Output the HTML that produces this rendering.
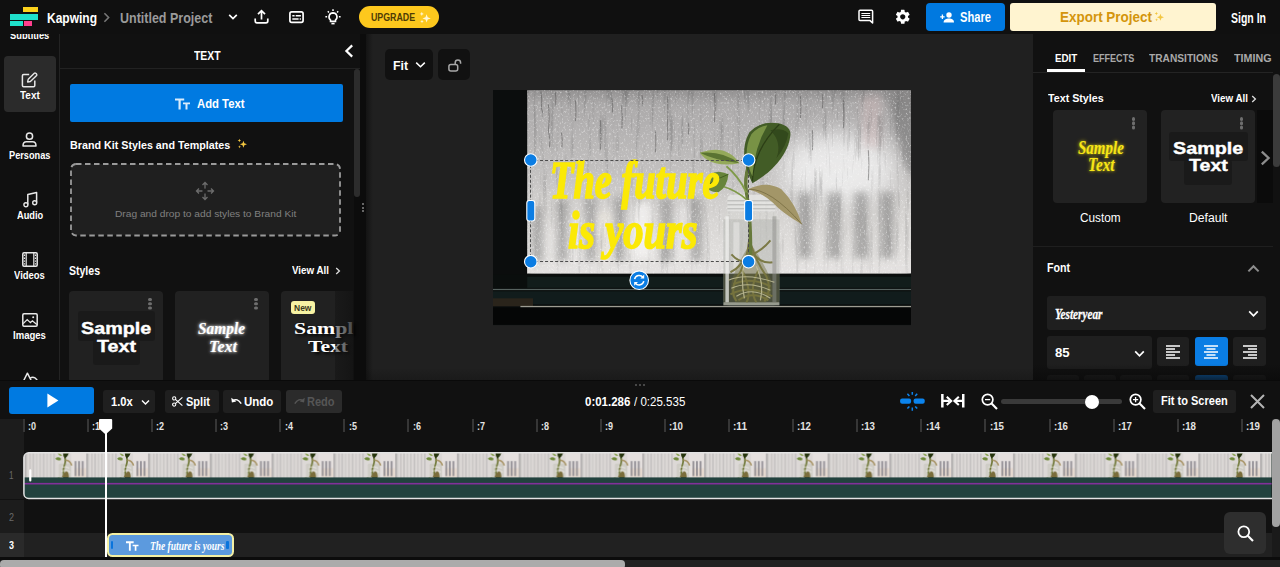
<!DOCTYPE html>
<html lang="en">
<head>
<meta charset="utf-8">
<title>Kapwing</title>
<style>
*{box-sizing:border-box;margin:0;padding:0}
html,body{width:1280px;height:567px;overflow:hidden;background:#111;color:#fff;font-family:"Liberation Sans",sans-serif}
#app{position:absolute;left:0;top:0;width:1280px;height:567px;overflow:hidden;background:#111}
.a{position:absolute}
svg{position:absolute;display:block;overflow:visible}
.t{position:absolute;white-space:nowrap;line-height:1;font-weight:bold;transform-origin:0 0;display:block}
.b{position:absolute;border-radius:4px}
</style>
</head>
<body>
<div id="app">
<!-- ===== SIDE BAR ===== -->
<div class="a" style="left:0;top:34px;width:60px;height:347px;background:#101010;border-right:1px solid #232323"></div>
<span class="t" style="left:10.0px;top:29.6px;font-size:11px;color:#fff;transform:scaleX(0.8460);">Subtitles</span>
<div class="a" style="left:3.5px;top:56.3px;width:52px;height:56px;border-radius:4px;background:#2b2b2b"></div>
<!-- text icon -->
<svg style="left:21px;top:71.5px" width="17.5" height="16" viewBox="0 0 17.5 16"><path d="M8.200 2.600 H2.600 Q1.400 2.600 1.400 3.800 V13.600 Q1.400 14.800 2.600 14.800 H12.600 Q13.800 14.800 13.800 13.600 V8.600" fill="none" stroke="#e8e8e8" stroke-width="1.5"/><path d="M6.600 10 L7.200 7.300 L13.300 1.200 Q14 0.600 14.700 1.200 L15.600 2.100 Q16.200 2.800 15.600 3.500 L9.400 9.500 Z" fill="none" stroke="#e8e8e8" stroke-width="1.400" stroke-linejoin="round"/></svg>
<span class="t" style="left:19.5px;top:89.6px;font-size:11px;color:#fff;transform:scaleX(0.9077);">Text</span>
<!-- personas -->
<svg style="left:22px;top:131.5px" width="15" height="15" viewBox="0 0 15 15"><circle cx="7.500" cy="4.200" r="3.100" fill="none" stroke="#e8e8e8" stroke-width="1.500"/><path d="M1 14 Q1 9.800 4.400 9.800 H10.600 Q14 9.800 14 14 Z" fill="none" stroke="#e8e8e8" stroke-width="1.500" stroke-linejoin="round"/></svg>
<span class="t" style="left:8.6px;top:149.6px;font-size:11px;color:#fff;transform:scaleX(0.8358);">Personas</span>
<!-- audio -->
<svg style="left:22.500px;top:191px" width="15" height="17" viewBox="0 0 15 17"><path d="M4.800 13.600 V3.600 L13.600 1.400 V11.600" fill="none" stroke="#e8e8e8" stroke-width="1.500" stroke-linejoin="round"/><circle cx="2.900" cy="13.800" r="2" fill="none" stroke="#e8e8e8" stroke-width="1.400"/><circle cx="11.700" cy="11.800" r="2" fill="none" stroke="#e8e8e8" stroke-width="1.400"/></svg>
<span class="t" style="left:16.7px;top:209.6px;font-size:11px;color:#fff;transform:scaleX(0.8405);">Audio</span>
<!-- videos -->
<svg style="left:22px;top:252px" width="16" height="15" viewBox="0 0 16 15"><rect x="0.800" y="0.800" width="14.400" height="13.400" rx="1.200" fill="none" stroke="#e8e8e8" stroke-width="1.500"/><path d="M4.200 1 V14 M11.800 1 V14" stroke="#e8e8e8" stroke-width="1.200"/><path d="M2.500 2.600 V12.600 M13.500 2.600 V12.600" stroke="#e8e8e8" stroke-width="1.200" stroke-dasharray="1.400 1.500"/></svg>
<span class="t" style="left:14.3px;top:269.6px;font-size:11px;color:#fff;transform:scaleX(0.8613);">Videos</span>
<!-- images -->
<svg style="left:22px;top:312.500px" width="16" height="14" viewBox="0 0 16 14"><rect x="0.800" y="0.800" width="14.400" height="12.400" rx="1.200" fill="none" stroke="#e8e8e8" stroke-width="1.500"/><path d="M1.200 10.600 L5.200 6.600 L8.400 9.600 L10.400 7.800 L14.800 11.600" fill="none" stroke="#e8e8e8" stroke-width="1.300"/><circle cx="11.200" cy="4.200" r="1" fill="#e8e8e8"/></svg>
<span class="t" style="left:13.3px;top:329.6px;font-size:11px;color:#fff;transform:scaleX(0.8676);">Images</span>
<!-- elements (cut) -->
<svg style="left:21px;top:371.500px" width="18" height="12" viewBox="0 0 18 12"><path d="M1 12 L6.400 1.200 L10.400 9" fill="none" stroke="#e8e8e8" stroke-width="1.500" stroke-linejoin="round"/><path d="M9.200 6.200 A4.600 4.600 0 0 1 16.400 10" fill="none" stroke="#e8e8e8" stroke-width="1.500"/></svg>

<!-- ===== TEXT PANEL ===== -->
<div class="a" style="left:60px;top:34px;width:306px;height:347px;background:#111"></div>
<span class="t" style="left:194.4px;top:49.8px;font-size:12.5px;color:#fff;transform:scaleX(0.8325);">TEXT</span>
<svg style="left:344px;top:44px" width="10" height="14" viewBox="0 0 10 14"><path d="M8.200 1.400 L2.400 7 L8.200 12.600" fill="none" stroke="#fff" stroke-width="2.200"/></svg>
<div class="a" style="left:60px;top:68px;width:300px;height:1px;background:#222"></div>
<!-- scrollbar -->
<div class="a" style="left:353.500px;top:69px;width:6.500px;height:312px;background:#0c0c0c"></div>
<div class="a" style="left:353.500px;top:69px;width:6.500px;height:128px;border-radius:3px;background:#2c2c2c"></div>
<div class="a" style="left:360px;top:34px;width:6px;height:347px;background:#0c0c0c"></div>
<div class="a" style="left:361.500px;top:203px;width:2px;height:2px;background:#666"></div>
<div class="a" style="left:361.500px;top:206.500px;width:2px;height:2px;background:#666"></div>
<div class="a" style="left:361.500px;top:210px;width:2px;height:2px;background:#666"></div>
<!-- add text -->
<div class="a" style="left:69.500px;top:84px;width:273.500px;height:37.500px;border-radius:2px;background:#007ae1"></div>
<svg style="left:174.500px;top:97.500px" width="15" height="12" viewBox="0 0 15 12"><path d="M0 0.400 H9.200 V2.600 H5.700 V11.600 H3.500 V2.600 H0 Z M8 4.400 H15 V6.300 H12.500 V11.600 H10.500 V6.300 H8 Z" fill="#d9ecfb"/></svg>
<span class="t" style="left:197.0px;top:96.9px;font-size:13.5px;color:#fff;transform:scaleX(0.8370);">Add Text</span>
<span class="t" style="left:69.5px;top:140.2px;font-size:11.5px;color:#fff;transform:scaleX(0.9330);">Brand Kit Styles and Templates</span>
<svg style="left:236.500px;top:138px" width="11" height="11" viewBox="0 0 13 13"><path d="M7.600 3.200 L8.700 6.300 L11.800 7.400 L8.700 8.500 L7.600 11.600 L6.500 8.500 L3.400 7.400 L6.500 6.300 Z M2.800 0.800 L3.400 2.300 L4.900 2.900 L3.400 3.500 L2.800 5 L2.200 3.500 L0.700 2.900 L2.200 2.300 Z M3 8.600 L3.500 9.900 L4.800 10.400 L3.500 10.900 L3 12.200 L2.500 10.900 L1.200 10.400 L2.500 9.900 Z" fill="#f3c640"/></svg>
<!-- dashed drop box -->
<svg style="left:70px;top:163px" width="271" height="73.500" viewBox="0 0 271 73.500"><rect x="1" y="1" width="269" height="71.500" rx="5" fill="#1f1f1f" stroke="#9a9a9a" stroke-width="1.800" stroke-dasharray="5.500 3.500"/></svg>
<svg style="left:195px;top:181px" width="20" height="20" viewBox="0 0 20 20"><path d="M10 1.500 V18.500 M1.500 10 H18.500 M7.500 4 L10 1.500 L12.500 4 M7.500 16 L10 18.500 L12.500 16 M4 7.500 L1.500 10 L4 12.500 M16 7.500 L18.500 10 L16 12.500" fill="none" stroke="#6c6c6c" stroke-width="1.300"/><circle cx="10" cy="10" r="2.600" fill="#1f1f1f"/></svg>
<span class="t" style="left:114.7px;top:208.9px;font-size:9.5px;color:#808080;transform:scaleX(1.0728);font-weight:normal;">Drag and drop to add styles to Brand Kit</span>
<span class="t" style="left:69.0px;top:265.2px;font-size:12px;color:#fff;transform:scaleX(0.8767);">Styles</span>
<span class="t" style="left:292.0px;top:265.4px;font-size:11.5px;color:#fff;transform:scaleX(0.8512);">View All</span>
<svg style="left:335px;top:266.500px" width="6" height="8" viewBox="0 0 6 8"><path d="M1.200 1 L4.400 4 L1.200 7" fill="none" stroke="#ddd" stroke-width="1.300"/></svg>
<!-- cards -->
<div class="a" style="left:69px;top:290.500px;width:94px;height:92px;border-radius:4px;background:#212121"></div>
<div class="a" style="left:175.300px;top:290.500px;width:94px;height:92px;border-radius:4px;background:#212121"></div>
<div class="a" style="left:281px;top:290.500px;width:72px;height:92px;border-radius:4px 0 0 4px;background:#212121"></div>
<!-- card1 -->
<div class="a" style="left:77.800px;top:311px;width:77.700px;height:30.400px;border-radius:3px;background:#1a1a1a"></div>
<div class="a" style="left:93px;top:340px;width:47.400px;height:25px;border-radius:3px;background:#1a1a1a"></div>
<span class="t" style="left:80.8px;top:320.2px;font-size:17px;color:#fff;transform:scaleX(1.1606);-webkit-text-stroke:0.400px #fff;">Sample</span>
<span class="t" style="left:97.0px;top:338.2px;font-size:17px;color:#fff;transform:scaleX(1.1572);-webkit-text-stroke:0.400px #fff;">Text</span>
<div class="a" style="left:148.300px;top:297.500px;width:3.400px;height:3.400px;border-radius:2px;background:#6e6e6e;box-shadow:0 4.300px 0 #6e6e6e,0 8.600px 0 #6e6e6e"></div>
<!-- card2 -->
<span class="t" style="left:198.0px;top:319.5px;font-size:17.5px;color:#fff;transform:scaleX(0.8788);font-family:'Liberation Serif',serif;font-style:italic;text-shadow:0 0 3px #fff,0 0 6px rgba(255,255,255,.5);">Sample</span>
<span class="t" style="left:208.5px;top:338.0px;font-size:17.5px;color:#fff;transform:scaleX(0.9223);font-family:'Liberation Serif',serif;font-style:italic;text-shadow:0 0 3px #fff,0 0 6px rgba(255,255,255,.5);">Text</span>
<div class="a" style="left:254.300px;top:297.500px;width:3.400px;height:3.400px;border-radius:2px;background:#6e6e6e;box-shadow:0 4.300px 0 #6e6e6e,0 8.600px 0 #6e6e6e"></div>
<!-- card3 -->
<div class="a" style="left:290.600px;top:300.500px;width:24.200px;height:13.500px;border-radius:3px;background:#f7f3a3"></div>
<span class="t" style="left:294.0px;top:302.7px;font-size:9.5px;color:#3a3a20;transform:scaleX(0.8953);">New</span>
<span class="t" style="left:293.6px;top:320.2px;font-size:17px;color:#fff;transform:scaleX(1.2830);font-family:'Liberation Serif',serif;text-shadow:2px 2px 3px #000;">Sampl</span>
<span class="t" style="left:308.0px;top:338.2px;font-size:17px;color:#fff;transform:scaleX(1.2698);font-family:'Liberation Serif',serif;text-shadow:2px 2px 3px #000;">Text</span>
<div class="a" style="left:335px;top:290px;width:18.500px;height:92px;background:linear-gradient(90deg,rgba(17,17,17,.45),rgba(17,17,17,.8))"></div>

<!-- ===== STAGE ===== -->
<div class="a" style="left:366px;top:34px;width:667px;height:347px;background:#202020"></div>
<div class="a" style="left:366px;top:34px;width:7px;height:347px;background:linear-gradient(90deg,rgba(10,10,10,.55),rgba(10,10,10,0))"></div>
<div class="a" style="left:385.300px;top:49px;width:47.700px;height:31.200px;border-radius:5px;background:#111"></div>
<span class="t" style="left:393.0px;top:58.8px;font-size:13.5px;color:#fff;transform:scaleX(0.9091);">Fit</span>
<svg style="left:414.500px;top:60.500px" width="11" height="8" viewBox="0 0 11 8"><path d="M1.200 1.600 L5.500 5.800 L9.800 1.600" fill="none" stroke="#fff" stroke-width="1.500"/></svg>
<div class="a" style="left:437.900px;top:49px;width:32.100px;height:31.200px;border-radius:5px;background:#111"></div>
<svg style="left:447.500px;top:59px" width="14" height="13" viewBox="0 0 14 13"><rect x="0.900" y="5.600" width="8.800" height="6.400" rx="2" fill="none" stroke="#a8a8a8" stroke-width="1.500"/><path d="M7.200 5.400 V3.800 A2.700 2.700 0 0 1 12.600 3.800 V4.800" fill="none" stroke="#a8a8a8" stroke-width="1.500"/></svg>
<div class="a" style="left:366px;top:368px;width:667px;height:13px;background:linear-gradient(180deg,rgba(10,10,10,0),rgba(10,10,10,.280))"></div>
<!-- canvas -->
<svg style="left:492.600px;top:89.700px" width="418" height="234.600" viewBox="492.600 89.700 418 234.600">
<defs>
<linearGradient id="gw" x1="0" y1="0" x2="0" y2="1"><stop offset="0" stop-color="#a7a5a5"/><stop offset="0.200" stop-color="#b3b1b1"/><stop offset="0.450" stop-color="#c3c1c0"/><stop offset="0.620" stop-color="#d2d0ce"/><stop offset="0.800" stop-color="#dcdad8"/><stop offset="1" stop-color="#e6e4e2"/></linearGradient>
<filter id="b3" x="-20%" y="-20%" width="140%" height="140%"><feGaussianBlur stdDeviation="3.500"/></filter>
<filter id="b9" x="-40%" y="-40%" width="180%" height="180%"><feGaussianBlur stdDeviation="11"/></filter>
<filter id="b05" x="-50%" y="-10%" width="200%" height="120%"><feGaussianBlur stdDeviation="0.450"/></filter>
<filter id="b1" x="-20%" y="-20%" width="140%" height="140%"><feGaussianBlur stdDeviation="0.700"/></filter>
<filter id="rain" x="0" y="0" width="100%" height="100%"><feTurbulence type="fractalNoise" baseFrequency="0.220 0.018" numOctaves="3" seed="7" result="n"/><feColorMatrix type="matrix" values="0 0 0 0 0.150  0 0 0 0 0.150  0 0 0 0 0.150  0 0 0 -2.600 1.150"/></filter>
<filter id="drops" x="0" y="0" width="100%" height="100%"><feTurbulence type="fractalNoise" baseFrequency="0.550 0.450" numOctaves="2" seed="3"/><feColorMatrix type="matrix" values="0 0 0 0 1  0 0 0 0 1  0 0 0 0 1  0 0 0 3.200 -1.750"/></filter>
<linearGradient id="gm" x1="0" y1="0" x2="0" y2="1"><stop offset="0" stop-color="#fff"/><stop offset="0.350" stop-color="#999"/><stop offset="1" stop-color="#555"/></linearGradient><mask id="mrain"><rect x="526.800" y="90" width="383.800" height="183" fill="url(#gm)"/></mask>
<clipPath id="cw"><rect x="526.800" y="90" width="383.800" height="183"/></clipPath>
</defs>
<rect x="492.600" y="89.700" width="418" height="234.600" fill="#0b0d0d"/>
<rect x="526.800" y="90" width="383.800" height="183" fill="url(#gw)"/>
<g clip-path="url(#cw)">
<g filter="url(#b9)"><ellipse cx="838" cy="168" rx="58" ry="36" fill="#f4f4f4" opacity="0.800"/><ellipse cx="600" cy="240" rx="70" ry="26" fill="#efedea" opacity="0.450"/></g>
<g filter="url(#b3)" fill="#6f6f6f" opacity="0.430">
<rect x="531" y="206" width="12" height="56"/><rect x="556" y="200" width="12" height="62"/><rect x="584" y="197" width="12" height="65"/><rect x="613" y="197" width="12" height="65"/><rect x="660" y="198" width="12" height="64"/><rect x="690" y="198" width="12" height="64"/>
</g><g filter="url(#b3)" fill="#6a6a6a" opacity="0.460">
<rect x="798" y="192" width="13" height="66"/><rect x="827" y="192" width="13" height="66"/><rect x="854" y="192" width="13" height="66"/><rect x="880" y="192" width="13" height="66"/>
</g>
<g filter="url(#b3)"><rect x="634" y="203" width="16" height="54" fill="#f4f2f1" opacity="0.800"/><rect x="598" y="212" width="13" height="48" fill="#ebe6dc" opacity="0.600"/><rect x="570" y="220" width="12" height="42" fill="#e8e6e4" opacity="0.500"/><rect x="676" y="206" width="12" height="52" fill="#eeeceb" opacity="0.500"/><rect x="526" y="262" width="384" height="12" fill="#e2e0de" opacity="0.800"/>
<path d="M884 84 H916 V180 L906 168 L895 130 Z" fill="#666666" opacity="0.520"/><rect x="862" y="92" width="18" height="55" fill="#d9bcbe" opacity="0.350"/><rect x="526" y="84" width="384" height="14" fill="#8c8a8a" opacity="0.600"/></g>
<g fill="none" stroke="#4e4c4c" stroke-width="1.100" opacity="0.480" filter="url(#b05)">
<path d="M540.500 91 Q542 100 541 108 Q543 112 542 116"/><path d="M548 104 Q549.500 118 548 130 Q550 140 549 147"/><path d="M561 132 Q562.500 140 561.500 147"/><path d="M555 92 Q556 99 555 106"/>
<path d="M611.500 98 Q613 106 612 112"/><path d="M621 105 Q622.500 116 621.500 128"/><path d="M641.500 94 Q643 100 642 106"/><path d="M600 120 Q601 135 600 150"/><path d="M575 100 Q576 112 575 121"/>
<path d="M688 122 Q689 128 688 134"/><path d="M714 93 Q715.500 108 714 122"/><path d="M667 96 Q668 112 667 126 Q668 134 667 140"/><path d="M655 130 Q656 140 655 152"/>
<path d="M800 96 Q801 106 800 118"/><path d="M822 94 Q823 100 822 108"/><path d="M843 100 Q844 115 843 128"/><path d="M775 92 Q776 98 775 104"/><path d="M868 150 Q869 165 868 180"/><path d="M812 130 Q813 140 812 150"/>
</g>
<g mask="url(#mrain)"><rect x="526.800" y="90" width="383.800" height="183" filter="url(#rain)" opacity="0.650"/></g>
<rect x="526.800" y="90" width="383.800" height="183" filter="url(#drops)" opacity="0.450"/>
</g>
<!-- sill -->
<rect x="492.600" y="273.800" width="418" height="51" fill="#0a0e0d"/>
<rect x="526.800" y="276.500" width="383.800" height="11" fill="#121d1b"/>
<rect x="492.600" y="288.600" width="418" height="1.200" fill="#56625f"/>
<rect x="492.600" y="291" width="418" height="13" fill="#111c1c"/>
<rect x="492.600" y="298" width="40" height="8" fill="#2a241b"/>
<rect x="520" y="305.600" width="390.600" height="1.500" fill="#9d9c92"/>
<rect x="492.600" y="307.200" width="418" height="17.100" fill="#050606"/>
<!-- jar -->
<g filter="url(#b1)">
<path d="M727 212 Q723 215 723 221 V300 Q723 305 729 305 H773 Q779 305 779 300 V221 Q779 215 775 212 V199 Q775 195 770 195 H732 Q727 195 727 199 Z" fill="#d6d6d3" opacity="0.450"/>
<path d="M727 199 Q727 194.500 732 194.500 H770 Q775 194.500 775 199 V211 H727 Z" fill="#e6e6e4" opacity="0.800"/>
<path d="M727 200.500 H775 M727 204.500 H775 M727 208.500 H775" stroke="#b4b4b1" stroke-width="1"/>
<rect x="723" y="219" width="56" height="55" fill="#a9aaa5" opacity="0.380"/>
<rect x="723" y="273.500" width="56" height="31.500" fill="#484d38" opacity="0.920"/>
<rect x="723" y="302" width="56" height="3" fill="#b9bbb2" opacity="0.700"/>
<rect x="725" y="216" width="3.500" height="86" fill="#f4f4f2" opacity="0.700"/><rect x="772" y="216" width="4" height="86" fill="#8e8e8a" opacity="0.500"/>
<rect x="733" y="222" width="6" height="48" fill="#f1f1ef" opacity="0.450"/>
<!-- roots -->
<path d="M748 246 Q738 262 732 278 Q728 296 736 302 H766 Q774 294 770 278 Q762 260 752 246 Z" fill="#6f6e3c" opacity="0.420"/>
<g fill="none" stroke="#77753f" stroke-width="2" opacity="0.950"><path d="M749 238 Q747 262 735 280 Q730 292 736 301"/><path d="M749 240 Q756 262 766 276 Q772 290 764 301"/><path d="M749 250 Q740 268 730 272"/><path d="M750 250 Q760 264 772 262"/><path d="M733 284 Q750 276 770 286"/><path d="M730 294 Q750 284 772 296"/><path d="M738 300 Q752 290 768 300"/><path d="M742 270 Q752 292 746 302"/><path d="M758 270 Q748 290 756 302"/><path d="M750 255 Q762 250 770 240"/><path d="M748 262 Q738 262 731 254"/></g>
<g fill="none" stroke="#c4c19a" stroke-width="1.200" opacity="0.850"><path d="M731 288 Q748 280 770 290"/><path d="M736 296 Q752 286 770 298"/><path d="M744 262 Q740 280 744 298"/><path d="M728 280 Q745 272 774 282"/><path d="M756 266 Q764 284 760 300"/></g>
<!-- stem -->
<path d="M750 262 Q751 220 746 192 Q744 178 748 166" fill="none" stroke="#66793a" stroke-width="3.400"/>
<path d="M746 192 Q738 176 726 166" fill="none" stroke="#7f9a48" stroke-width="1.800"/>
<path d="M747 200 Q736 190 722 186" fill="none" stroke="#7f9a48" stroke-width="1.600"/>
<!-- leaves -->
<path d="M752 183 Q737 153 749 132 Q760 120 778 123 Q791 126 790 135 Q788 154 768 172 Q759 179 752 183 Z" fill="#435c27"/>
<path d="M752 181 Q753 150 779 124" fill="none" stroke="#2c3f17" stroke-width="1.300"/>
<path d="M752 176 Q741 153 751 134 Q758 126 767 125 Q754 147 752 176 Z" fill="#86a04e" opacity="0.800"/>
<path d="M770 130 Q782 127 788 133 Q786 146 776 158 Q782 142 770 130 Z" fill="#2f441a" opacity="0.800"/>
<path d="M739 163 Q726 143 699.500 152.500 Q710 168 739 163 Z" fill="#94a95a"/>
<path d="M739 163 Q722 150 699.500 152.500 Q714 160 739 163 Z" fill="#5a7330"/>
<path d="M728 174 Q712 166 703.500 182 Q706 192 718 192 Q727 187 728 174 Z" fill="#66843a"/>
<path d="M728 174 Q716 178 706 186" fill="none" stroke="#3e5a20" stroke-width="0.900"/>
<path d="M748 189 Q766 180 781 189 Q795 203 801.500 224 Q782 213 772 202 Q762 193 748 189 Z" fill="#a39667"/>
<path d="M748 189 Q770 188 801.500 224" fill="none" stroke="#7b6f45" stroke-width="0.900"/>
</g>
</svg>
<!-- canvas text -->
<span class="t" style="left:549.7px;top:155.2px;font-size:52px;color:#fbe906;transform:scaleX(0.7384);font-family:'Liberation Serif',serif;font-style:italic;-webkit-text-stroke:1.700px #fbe906;">The future</span>
<span class="t" style="left:567.7px;top:204.7px;font-size:52px;color:#fbe906;transform:scaleX(0.7800);font-family:'Liberation Serif',serif;font-style:italic;-webkit-text-stroke:1.700px #fbe906;">is yours</span>
<div class="a" style="left:530.300px;top:159.500px;width:218.800px;height:102.700px;border:1px dashed #4c4c4c"></div>
<svg style="left:520px;top:150px" width="240" height="145" viewBox="520 150 240 145">
<g fill="#0b7de3" stroke="#fff" stroke-width="1.100">
<circle cx="530.800" cy="160" r="6.300"/><circle cx="748.600" cy="160" r="6.300"/><circle cx="530.800" cy="261.700" r="6.300"/><circle cx="748.600" cy="261.700" r="6.300"/>
<rect x="526.800" y="200.500" width="8" height="20.500" rx="2.500"/><rect x="744.600" y="200.500" width="8" height="20.500" rx="2.500"/>
<circle cx="639.200" cy="280.200" r="9.300"/>
</g>
<g fill="none" stroke="#fff" stroke-width="1.500"><path d="M634.600 279.200 A4.800 4.800 0 0 1 643 277.200"/><path d="M643.800 281.200 A4.800 4.800 0 0 1 635.400 283.200"/></g>
<path d="M644.200 274.600 V278.400 H640.400 Z M634.200 285.800 V282 H638 Z" fill="#fff"/>
</svg>

<!-- ===== RIGHT PANEL ===== -->
<div class="a" style="left:1033px;top:34px;width:247px;height:347px;background:#111"></div>
<span class="t" style="left:1055.4px;top:53.0px;font-size:11.5px;color:#fff;transform:scaleX(0.8472);">EDIT</span>
<span class="t" style="left:1092.8px;top:53.0px;font-size:11.5px;color:#a9a9a9;transform:scaleX(0.7864);">EFFECTS</span>
<span class="t" style="left:1149.0px;top:53.0px;font-size:11.5px;color:#a9a9a9;transform:scaleX(0.8851);">TRANSITIONS</span>
<span class="t" style="left:1233.5px;top:53.0px;font-size:11.5px;color:#a9a9a9;transform:scaleX(0.9317);">TIMING</span>
<div class="a" style="left:1033px;top:72px;width:240px;height:1px;background:#242424"></div>
<div class="a" style="left:1047px;top:68.700px;width:38.400px;height:3px;background:#fff"></div>
<!-- scrollbar -->
<div class="a" style="left:1273px;top:73.500px;width:7px;height:93px;border-radius:3.500px;background:#3b3b3b"></div>
<span class="t" style="left:1048.3px;top:93.1px;font-size:11.5px;color:#fff;transform:scaleX(0.9303);">Text Styles</span>
<span class="t" style="left:1211.0px;top:92.9px;font-size:11.5px;color:#fff;transform:scaleX(0.8512);">View All</span>
<svg style="left:1250.500px;top:94.500px" width="6" height="8" viewBox="0 0 6 8"><path d="M1.200 1 L4.400 4 L1.200 7" fill="none" stroke="#ddd" stroke-width="1.300"/></svg>
<div class="a" style="left:1053px;top:109.900px;width:94px;height:93.600px;border-radius:4px;background:#222"></div>
<div class="a" style="left:1160.800px;top:109.900px;width:94px;height:93.600px;border-radius:4px;background:#222"></div>
<div class="a" style="left:1257.400px;top:109.900px;width:15.600px;height:93.600px;background:#0b0b0b"></div>
<svg style="left:1259.500px;top:149.500px" width="11" height="16" viewBox="0 0 11 16"><path d="M1.800 1.600 L8.600 8 L1.800 14.400" fill="none" stroke="#8d8d8d" stroke-width="2.300"/></svg>
<div class="a" style="left:1131.800px;top:117.300px;width:3.400px;height:3.400px;border-radius:2px;background:#6e6e6e;box-shadow:0 4.300px 0 #6e6e6e,0 8.600px 0 #6e6e6e"></div>
<div class="a" style="left:1239.600px;top:117.300px;width:3.400px;height:3.400px;border-radius:2px;background:#6e6e6e;box-shadow:0 4.300px 0 #6e6e6e,0 8.600px 0 #6e6e6e"></div>
<span class="t" style="left:1077.6px;top:138.5px;font-size:18.5px;color:#f7e616;transform:scaleX(0.8102);font-family:'Liberation Serif',serif;font-style:italic;text-shadow:0 0 3px rgba(247,230,22,.7),0 0 6px rgba(247,230,22,.4);">Sample</span>
<span class="t" style="left:1088.0px;top:155.5px;font-size:18.5px;color:#f7e616;transform:scaleX(0.8256);font-family:'Liberation Serif',serif;font-style:italic;text-shadow:0 0 3px rgba(247,230,22,.7),0 0 6px rgba(247,230,22,.4);">Text</span>
<div class="a" style="left:1169px;top:131.700px;width:78.600px;height:29.300px;border-radius:3px;background:#1a1a1a"></div>
<div class="a" style="left:1184.400px;top:160px;width:47.600px;height:25px;border-radius:3px;background:#1a1a1a"></div>
<span class="t" style="left:1172.8px;top:140.3px;font-size:17px;color:#fff;transform:scaleX(1.1606);-webkit-text-stroke:0.400px #fff;">Sample</span>
<span class="t" style="left:1188.7px;top:157.2px;font-size:17px;color:#fff;transform:scaleX(1.1512);-webkit-text-stroke:0.400px #fff;">Text</span>
<span class="t" style="left:1080.0px;top:211.6px;font-size:12px;color:#fff;transform:scaleX(0.9820);font-weight:normal;">Custom</span>
<span class="t" style="left:1189.0px;top:211.6px;font-size:12px;color:#fff;transform:scaleX(1.0123);font-weight:normal;">Default</span>
<div class="a" style="left:1033px;top:246px;width:240px;height:1px;background:#1f1f1f"></div>
<span class="t" style="left:1047.4px;top:262.2px;font-size:12px;color:#fff;transform:scaleX(0.8885);">Font</span>
<svg style="left:1246.500px;top:263.500px" width="13" height="9" viewBox="0 0 13 9"><path d="M1.400 7.400 L6.500 2.200 L11.600 7.400" fill="none" stroke="#8d8d8d" stroke-width="2"/></svg>
<div class="a" style="left:1047.400px;top:296.400px;width:218.600px;height:34px;border-radius:3px;background:#1f1f1f"></div>
<span class="t" style="left:1054.6px;top:306.5px;font-size:15px;color:#fff;transform:scaleX(0.7487);font-family:'Liberation Serif',serif;font-style:italic;-webkit-text-stroke:0.300px #fff;">Yesteryear</span>
<svg style="left:1247.500px;top:310px" width="11" height="8" viewBox="0 0 11 8"><path d="M1.200 1.400 L5.500 5.800 L9.800 1.400" fill="none" stroke="#fff" stroke-width="1.700"/></svg>
<div class="a" style="left:1047.400px;top:336.300px;width:105px;height:32.700px;border-radius:3px;background:#1f1f1f"></div>
<span class="t" style="left:1054.9px;top:346.2px;font-size:13.5px;color:#fff;transform:scaleX(0.9780);">85</span>
<svg style="left:1133.800px;top:349.500px" width="11" height="8" viewBox="0 0 11 8"><path d="M1.200 1.400 L5.500 5.800 L9.800 1.400" fill="none" stroke="#fff" stroke-width="1.700"/></svg>
<div class="a" style="left:1157px;top:337px;width:32px;height:29.300px;border-radius:3px;background:#1f1f1f"></div>
<div class="a" style="left:1195px;top:337px;width:32.500px;height:29.300px;border-radius:3px;background:#0a7de4"></div>
<div class="a" style="left:1233px;top:337px;width:33px;height:29.300px;border-radius:3px;background:#1f1f1f"></div>
<svg style="left:1166px;top:344.500px" width="14" height="14" viewBox="0 0 14 14"><path d="M0 1 H14 M0 4 H9 M0 7 H14 M0 10 H9 M0 13 H14" stroke="#fff" stroke-width="1.500"/></svg>
<svg style="left:1204.200px;top:344.500px" width="14" height="14" viewBox="0 0 14 14"><path d="M0 1 H14 M2.500 4 H11.500 M0 7 H14 M2.500 10 H11.500 M0 13 H14" stroke="#fff" stroke-width="1.500"/></svg>
<svg style="left:1242.500px;top:344.500px" width="14" height="14" viewBox="0 0 14 14"><path d="M0 1 H14 M5 4 H14 M0 7 H14 M5 10 H14 M0 13 H14" stroke="#fff" stroke-width="1.500"/></svg>
<!-- next row (cut) -->
<div class="a" style="left:1047.400px;top:375px;width:32px;height:12px;border-radius:3px;background:#1f1f1f"></div>
<div class="a" style="left:1084px;top:375px;width:32px;height:12px;border-radius:3px;background:#1f1f1f"></div>
<div class="a" style="left:1120px;top:375px;width:32px;height:12px;border-radius:3px;background:#1f1f1f"></div>
<div class="a" style="left:1157px;top:375px;width:32px;height:12px;border-radius:3px;background:#1f1f1f"></div>
<div class="a" style="left:1195px;top:375px;width:32.500px;height:12px;border-radius:3px;background:#0a5ca8"></div>
<div class="a" style="left:1233px;top:375px;width:33px;height:12px;border-radius:3px;background:#1f1f1f"></div>
<div class="a" style="left:1033px;top:364px;width:247px;height:17px;background:linear-gradient(180deg,rgba(10,10,10,0),rgba(10,10,10,.720))"></div>

<!-- ===== TOP BAR ===== -->
<div class="a" style="left:0;top:0;width:1280px;height:34px;background:#101010"></div>
<div class="a" style="left:23px;top:7.100px;width:14.700px;height:5.400px;background:#fcd21c"></div>
<div class="a" style="left:10px;top:14px;width:27.700px;height:5.700px;background:#1fe0cb"></div>
<div class="a" style="left:10px;top:21.100px;width:12.600px;height:5.100px;background:#1fe0cb"></div>
<div class="a" style="left:24.200px;top:21.100px;width:8px;height:5.100px;background:#ff3f8e"></div>
<span class="t" style="left:47.0px;top:10.5px;font-size:14px;color:#fff;transform:scaleX(0.8570);">Kapwing</span>
<svg style="left:103.300px;top:12.300px" width="7.500" height="11" viewBox="0 0 7.500 11"><path d="M1.400 1.300 L5.600 5.500 L1.400 9.700" fill="none" stroke="#777" stroke-width="1.6"/></svg>
<span class="t" style="left:120.0px;top:10.5px;font-size:14px;color:#9a9a9a;transform:scaleX(0.8921);">Untitled Project</span>
<svg style="left:228px;top:13px" width="10" height="8" viewBox="0 0 10 8"><path d="M1.2 1.8 L5 5.6 L8.8 1.8" fill="none" stroke="#fff" stroke-width="1.7"/></svg>
<!-- upload -->
<svg style="left:253.500px;top:8.800px" width="15" height="15" viewBox="0 0 15 15"><path d="M7.500 10.400 V1.800 M4 5.200 L7.500 1.600 L11 5.200" fill="none" stroke="#fff" stroke-width="1.700"/><path d="M1.200 9.600 V12 Q1.200 13.800 3 13.800 H12 Q13.800 13.800 13.800 12 V9.600" fill="none" stroke="#fff" stroke-width="1.700"/></svg>
<!-- subtitles -->
<svg style="left:289px;top:10.800px" width="15" height="12.200" viewBox="0 0 15 12.200"><rect x="0.900" y="0.900" width="13.200" height="10.400" rx="1.800" fill="none" stroke="#fff" stroke-width="1.700"/><path d="M3.300 4.800 H5.600 M6.700 4.800 H11.900 M3.300 8 H9.600 M10.700 8 H11.900" stroke="#fff" stroke-width="1.500"/></svg>
<!-- bulb -->
<svg style="left:324.700px;top:8.800px" width="16" height="16" viewBox="0 0 16 16"><path d="M8 3.900 A4 4 0 0 0 5.500 11 V12.400 H10.500 V11 A4 4 0 0 0 8 3.900 Z" fill="none" stroke="#fff" stroke-width="1.600"/><path d="M6.400 14.600 H9.600" stroke="#fff" stroke-width="1.600"/><path d="M8 0.300 V1.900 M2.800 2.300 L3.900 3.500 M13.200 2.300 L12.100 3.500 M0.400 7.800 H2.100 M13.900 7.800 H15.600" stroke="#fff" stroke-width="1.500"/></svg>
<!-- upgrade -->
<div class="a" style="left:359px;top:6px;width:80px;height:21.5px;border-radius:11px;background:#fdc81d"></div>
<span class="t" style="left:370.7px;top:12.2px;font-size:11px;color:#4f3c05;transform:scaleX(0.8016);">UPGRADE</span>
<svg style="left:419px;top:10.5px" width="13" height="13" viewBox="0 0 13 13"><path d="M7.6 3.2 L8.7 6.3 L11.8 7.4 L8.7 8.5 L7.6 11.6 L6.5 8.5 L3.4 7.4 L6.5 6.3 Z M2.8 0.8 L3.4 2.3 L4.9 2.9 L3.4 3.5 L2.8 5 L2.2 3.5 L0.7 2.9 L2.2 2.3 Z M3 8.6 L3.5 9.9 L4.8 10.4 L3.5 10.9 L3 12.2 L2.5 10.9 L1.2 10.4 L2.5 9.9 Z" fill="#fff7d6"/></svg>
<!-- comment -->
<svg style="left:858px;top:9px" width="15.500" height="15" viewBox="0 0 15.500 15"><path d="M2 1.300 H13.600 Q14.600 1.300 14.600 2.300 V14 L11.800 11.400 H2 Q1 11.400 1 10.400 V2.300 Q1 1.300 2 1.300 Z" fill="none" stroke="#fff" stroke-width="1.500" stroke-linejoin="round"/><path d="M3.400 4.500 H12.200 M3.400 6.500 H12.200 M3.400 8.500 H12.200" stroke="#fff" stroke-width="1.100"/></svg>
<!-- gear -->
<svg style="left:894.100px;top:8.100px" width="17.500" height="17.500" viewBox="0 0 24 24"><path fill="#fff" d="M19.14 12.94c.04-.3.06-.61.06-.94 0-.32-.02-.64-.07-.94l2.03-1.58a.49.49 0 0 0 .12-.61l-1.92-3.32a.488.488 0 0 0-.59-.22l-2.39.96c-.5-.38-1.03-.7-1.62-.94l-.36-2.54a.484.484 0 0 0-.48-.41h-3.84c-.24 0-.43.17-.47.41l-.36 2.54c-.59.24-1.13.57-1.62.94l-2.39-.96c-.22-.08-.47 0-.59.22L2.74 8.870c-.12.21-.08.47.12.61l2.03 1.58c-.05.3-.09.63-.09.94s.02.64.07.94l-2.03 1.58a.49.49 0 0 0-.12.61l1.920 3.32c.12.22.37.29.59.22l2.390-.96c.5.38 1.030.7 1.620.94l.36 2.540c.05.24.24.41.48.41h3.840c.24 0 .44-.17.47-.41l.36-2.540c.59-.24 1.130-.56 1.620-.94l2.390.96c.22.08.47 0 .59-.22l1.920-3.320c.12-.22.07-.47-.12-.61l-2.010-1.580zM12 15.600c-1.980 0-3.600-1.620-3.600-3.600s1.620-3.600 3.600-3.600 3.600 1.620 3.600 3.600-1.620 3.600-3.600 3.600z"/></svg>
<!-- share -->
<div class="a" style="left:925.5px;top:2.7px;width:79.5px;height:28.3px;border-radius:4px;background:#0079e0"></div>
<svg style="left:939.5px;top:11.5px" width="14" height="11" viewBox="0 0 14 11"><circle cx="9" cy="3" r="2.7" fill="#fff"/><path d="M3.6 10.6 C3.6 7.6 6.2 6.6 9 6.6 C11.800 6.6 14 7.6 14 10.6 Z" fill="#fff"/><path d="M0.200 4.800 H4.600 M2.400 2.600 V7" stroke="#fff" stroke-width="1.3"/></svg>
<span class="t" style="left:960.3px;top:9.8px;font-size:14px;color:#fff;transform:scaleX(0.7965);">Share</span>
<!-- export -->
<div class="a" style="left:1010px;top:3px;width:206px;height:28px;border-radius:3px;background:#fff4d0"></div>
<span class="t" style="left:1060.0px;top:9.3px;font-size:15px;color:#d4950c;transform:scaleX(0.8973);">Export Project</span>
<svg style="left:1154px;top:11px" width="11" height="11" viewBox="0 0 13 13"><path d="M7.600 3.200 L8.700 6.300 L11.800 7.400 L8.700 8.500 L7.600 11.600 L6.500 8.500 L3.400 7.400 L6.500 6.300 Z M2.800 0.800 L3.400 2.300 L4.900 2.900 L3.400 3.500 L2.800 5 L2.200 3.500 L0.700 2.900 L2.200 2.300 Z M3 8.600 L3.500 9.900 L4.800 10.400 L3.500 10.900 L3 12.200 L2.500 10.900 L1.200 10.400 L2.500 9.900 Z" fill="#f3c640"/></svg>
<span class="t" style="left:1231.0px;top:10.5px;font-size:14px;color:#fff;transform:scaleX(0.7499);">Sign In</span>

<!-- ===== TIMELINE ===== -->
<div class="a" style="left:0;top:380.500px;width:1280px;height:187px;background:#111"></div>
<div class="a" style="left:0;top:380px;width:1280px;height:1px;background:#0a0a0a"></div>
<div class="a" style="left:635.3px;top:383.500px;width:2px;height:2px;border-radius:1px;background:#5a5a5a"></div>
<div class="a" style="left:639.3px;top:383.500px;width:2px;height:2px;border-radius:1px;background:#5a5a5a"></div>
<div class="a" style="left:643.3px;top:383.500px;width:2px;height:2px;border-radius:1px;background:#5a5a5a"></div>
<div class="a" style="left:9px;top:386.700px;width:85px;height:27.500px;border-radius:3px;background:#007ae1"></div>
<svg style="left:47px;top:393px" width="12" height="15" viewBox="0 0 12 15"><path d="M0.400 0.600 L11.400 7.500 L0.400 14.400 Z" fill="#fff"/></svg>
<div class="a" style="left:103.200px;top:390px;width:52.300px;height:23px;border-radius:3px;background:#1f1f1f"></div>
<span class="t" style="left:111.0px;top:395.0px;font-size:13px;color:#fff;transform:scaleX(0.8573);">1.0x</span>
<svg style="left:140.500px;top:398.500px" width="9" height="7" viewBox="0 0 9 7"><path d="M1 1.400 L4.500 5 L8 1.400" fill="none" stroke="#fff" stroke-width="1.400"/></svg>
<div class="a" style="left:165px;top:390px;width:53.500px;height:23px;border-radius:3px;background:#1f1f1f"></div>
<svg style="left:172.400px;top:396px" width="11" height="11" viewBox="0 0 11 11"><circle cx="2.200" cy="2.400" r="1.600" fill="none" stroke="#fff" stroke-width="1.100"/><circle cx="2.200" cy="8.600" r="1.600" fill="none" stroke="#fff" stroke-width="1.100"/><path d="M3.400 3.400 L10.400 9.600 M3.400 7.600 L10.400 1.400" stroke="#fff" stroke-width="1.200"/></svg>
<span class="t" style="left:186.4px;top:395.0px;font-size:13px;color:#fff;transform:scaleX(0.8484);">Split</span>
<div class="a" style="left:223px;top:390px;width:58.200px;height:23px;border-radius:3px;background:#1f1f1f"></div>
<svg style="left:231px;top:397px" width="11" height="9" viewBox="0 0 11 9"><path d="M1.400 4 Q6.500 0.400 10.200 6.600" fill="none" stroke="#fff" stroke-width="1.500"/><path d="M0.300 0.800 L0.900 5.400 L5.200 4.600 Z" fill="#fff"/></svg>
<span class="t" style="left:244.0px;top:395.0px;font-size:13px;color:#fff;transform:scaleX(0.8820);">Undo</span>
<div class="a" style="left:286px;top:390px;width:56.200px;height:23px;border-radius:3px;background:#2b2b2b"></div>
<svg style="left:293.500px;top:397px" width="11" height="9" viewBox="0 0 11 9"><path d="M9.600 4 Q4.500 0.400 0.800 6.600" fill="none" stroke="#555" stroke-width="1.500"/><path d="M10.700 0.800 L10.100 5.400 L5.800 4.600 Z" fill="#555"/></svg>
<span class="t" style="left:307.4px;top:395.0px;font-size:13px;color:#565656;transform:scaleX(0.8492);">Redo</span>
<span class="t" style="left:585.0px;top:395.5px;font-size:12.5px;color:#fff;transform:scaleX(0.9178);">0:01.286</span>
<span class="t" style="left:634.4px;top:395.5px;font-size:12.5px;color:#fff;transform:scaleX(0.9225);font-weight:normal;">/ 0:25.535</span>
<svg style="left:900px;top:391px" width="25" height="20" viewBox="0 0 25 20"><rect x="0.100" y="7.500" width="11" height="5.200" rx="2" fill="#0b84ee"/><rect x="13.600" y="7.500" width="11.100" height="5.200" rx="2" fill="#0b84ee"/><path d="M12.300 1 V3.800 M7.400 2.800 L9.400 5 M17.200 2.800 L15.200 5 M12.300 19.700 V16.600 M7.400 17.600 L9.400 15.400 M17.200 17.600 L15.200 15.400" stroke="#0b84ee" stroke-width="1.500"/></svg>
<svg style="left:941px;top:394.300px" width="24" height="14" viewBox="0 0 24 14"><path d="M1.350 0 V13.600 M22.250 0 V13.600" stroke="#fff" stroke-width="2.500"/><path d="M2 6.900 H8.600 M21.600 6.900 H15" stroke="#fff" stroke-width="2.100"/><path d="M5.800 2.800 L10.200 6.900 L5.800 11 M17.800 2.800 L13.400 6.900 L17.800 11" fill="none" stroke="#fff" stroke-width="2.100"/></svg>
<svg style="left:980.500px;top:392.500px" width="17" height="17" viewBox="0 0 17 17"><circle cx="6.600" cy="6.600" r="5.300" fill="none" stroke="#fff" stroke-width="1.700"/><path d="M10.600 10.600 L16 16" stroke="#fff" stroke-width="2.100"/><path d="M4 6.600 H9.200" stroke="#fff" stroke-width="1.300"/></svg>
<div class="a" style="left:1001px;top:399px;width:121px;height:5.200px;border-radius:2.600px;background:#3a3a3a"></div>
<div class="a" style="left:1084.600px;top:394.600px;width:14px;height:14px;border-radius:7px;background:#fff"></div>
<svg style="left:1129px;top:392.500px" width="17" height="17" viewBox="0 0 17 17"><circle cx="6.600" cy="6.600" r="5.300" fill="none" stroke="#fff" stroke-width="1.700"/><path d="M10.600 10.600 L16 16" stroke="#fff" stroke-width="2.100"/><path d="M4 6.600 H9.200 M6.600 4 V9.200" stroke="#fff" stroke-width="1.300"/></svg>
<div class="a" style="left:1153.400px;top:390px;width:82.600px;height:23px;border-radius:3px;background:#1f1f1f"></div>
<span class="t" style="left:1161.0px;top:395.2px;font-size:12.5px;color:#fff;transform:scaleX(0.8822);">Fit to Screen</span>
<svg style="left:1250px;top:394px" width="15" height="15" viewBox="0 0 15 15"><path d="M1 1 L14 14 M14 1 L1 14" stroke="#b4b4b4" stroke-width="2"/></svg>
<div class="a" style="left:0;top:419px;width:23.600px;height:140px;background:#1c1c1c"></div>
<div class="a" style="left:0;top:533px;width:1272px;height:24px;background:#212121"></div>
<div class="a" style="left:0;top:533px;width:23.600px;height:24px;background:#2a2a2a"></div>
<div class="a" style="left:0;top:499px;width:23.600px;height:1px;background:#111"></div>
<div class="a" style="left:23px;top:419px;width:2px;height:13px;background:#363636"></div>
<span class="t" style="left:28.1px;top:421.2px;font-size:11px;color:#e4e4e4;transform:scaleX(0.8179);">:0</span>
<div class="a" style="left:87px;top:419px;width:2px;height:13px;background:#363636"></div>
<span class="t" style="left:92.2px;top:421.2px;font-size:11px;color:#e4e4e4;transform:scaleX(0.8179);">:1</span>
<div class="a" style="left:151px;top:419px;width:2px;height:13px;background:#363636"></div>
<span class="t" style="left:156.3px;top:421.2px;font-size:11px;color:#e4e4e4;transform:scaleX(0.8179);">:2</span>
<div class="a" style="left:215px;top:419px;width:2px;height:13px;background:#363636"></div>
<span class="t" style="left:220.4px;top:421.2px;font-size:11px;color:#e4e4e4;transform:scaleX(0.8179);">:3</span>
<div class="a" style="left:279px;top:419px;width:2px;height:13px;background:#363636"></div>
<span class="t" style="left:284.5px;top:421.2px;font-size:11px;color:#e4e4e4;transform:scaleX(0.8179);">:4</span>
<div class="a" style="left:343px;top:419px;width:2px;height:13px;background:#363636"></div>
<span class="t" style="left:348.6px;top:421.2px;font-size:11px;color:#e4e4e4;transform:scaleX(0.8179);">:5</span>
<div class="a" style="left:407px;top:419px;width:2px;height:13px;background:#363636"></div>
<span class="t" style="left:412.7px;top:421.2px;font-size:11px;color:#e4e4e4;transform:scaleX(0.8179);">:6</span>
<div class="a" style="left:472px;top:419px;width:2px;height:13px;background:#363636"></div>
<span class="t" style="left:476.8px;top:421.2px;font-size:11px;color:#e4e4e4;transform:scaleX(0.8179);">:7</span>
<div class="a" style="left:536px;top:419px;width:2px;height:13px;background:#363636"></div>
<span class="t" style="left:540.9px;top:421.2px;font-size:11px;color:#e4e4e4;transform:scaleX(0.8179);">:8</span>
<div class="a" style="left:600px;top:419px;width:2px;height:13px;background:#363636"></div>
<span class="t" style="left:605.0px;top:421.2px;font-size:11px;color:#e4e4e4;transform:scaleX(0.8179);">:9</span>
<div class="a" style="left:664px;top:419px;width:2px;height:13px;background:#363636"></div>
<span class="t" style="left:669.1px;top:421.2px;font-size:11px;color:#e4e4e4;transform:scaleX(0.8802);">:10</span>
<div class="a" style="left:728px;top:419px;width:2px;height:13px;background:#363636"></div>
<span class="t" style="left:733.2px;top:421.2px;font-size:11px;color:#e4e4e4;transform:scaleX(0.9152);">:11</span>
<div class="a" style="left:792px;top:419px;width:2px;height:13px;background:#363636"></div>
<span class="t" style="left:797.3px;top:421.2px;font-size:11px;color:#e4e4e4;transform:scaleX(0.8802);">:12</span>
<div class="a" style="left:856px;top:419px;width:2px;height:13px;background:#363636"></div>
<span class="t" style="left:861.4px;top:421.2px;font-size:11px;color:#e4e4e4;transform:scaleX(0.8802);">:13</span>
<div class="a" style="left:920px;top:419px;width:2px;height:13px;background:#363636"></div>
<span class="t" style="left:925.5px;top:421.2px;font-size:11px;color:#e4e4e4;transform:scaleX(0.8802);">:14</span>
<div class="a" style="left:984px;top:419px;width:2px;height:13px;background:#363636"></div>
<span class="t" style="left:989.6px;top:421.2px;font-size:11px;color:#e4e4e4;transform:scaleX(0.8802);">:15</span>
<div class="a" style="left:1049px;top:419px;width:2px;height:13px;background:#363636"></div>
<span class="t" style="left:1053.7px;top:421.2px;font-size:11px;color:#e4e4e4;transform:scaleX(0.8802);">:16</span>
<div class="a" style="left:1113px;top:419px;width:2px;height:13px;background:#363636"></div>
<span class="t" style="left:1117.8px;top:421.2px;font-size:11px;color:#e4e4e4;transform:scaleX(0.8802);">:17</span>
<div class="a" style="left:1177px;top:419px;width:2px;height:13px;background:#363636"></div>
<span class="t" style="left:1181.9px;top:421.2px;font-size:11px;color:#e4e4e4;transform:scaleX(0.8802);">:18</span>
<div class="a" style="left:1241px;top:419px;width:2px;height:13px;background:#363636"></div>
<span class="t" style="left:1246.0px;top:421.2px;font-size:11px;color:#e4e4e4;transform:scaleX(0.8802);">:19</span>
<span class="t" style="left:9.0px;top:470.1px;font-size:11.5px;color:#6a6a6a;transform:scaleX(0.7024);font-weight:normal;">1</span>
<span class="t" style="left:9.0px;top:511.7px;font-size:11.5px;color:#6a6a6a;transform:scaleX(0.7805);font-weight:normal;">2</span>
<span class="t" style="left:8.8px;top:539.9px;font-size:11.5px;color:#fff;transform:scaleX(0.7805);">3</span>
<svg style="left:23.300px;top:451.700px" width="1248.7" height="47.200" viewBox="0 0 1248.7 47.200"><defs><filter id="tb" x="-5%" y="-20%" width="110%" height="140%"><feGaussianBlur stdDeviation="0.750"/></filter><pattern id="thumb" x="1.200" y="1.100" width="61.800" height="24.300" patternUnits="userSpaceOnUse"><rect width="61.800" height="24.300" fill="#dcd8d6"/><g filter="url(#tb)"><rect x="1.5" y="-2" width="1.600" height="28" fill="#a19e9f" opacity="0.22"/><rect x="5.0" y="-2" width="1.600" height="28" fill="#a19e9f" opacity="0.29"/><rect x="8.2" y="-2" width="1.600" height="28" fill="#a19e9f" opacity="0.37"/><rect x="11.6" y="-2" width="1.600" height="28" fill="#a19e9f" opacity="0.22"/><rect x="15.0" y="-2" width="1.600" height="28" fill="#a19e9f" opacity="0.29"/><rect x="18.6" y="-2" width="1.600" height="28" fill="#a19e9f" opacity="0.37"/><rect x="22.0" y="-2" width="1.600" height="28" fill="#a19e9f" opacity="0.22"/><rect x="25.6" y="-2" width="1.600" height="28" fill="#a19e9f" opacity="0.29"/><rect x="29.0" y="-2" width="1.600" height="28" fill="#a19e9f" opacity="0.37"/><rect x="47" y="-2" width="14.800" height="28" fill="#ece8e5" opacity="0.550"/><rect x="50" y="15" width="11.800" height="11" fill="#e3cdb9" opacity="0.400"/><rect x="50.3" y="8" width="1.900" height="15" fill="#85828a" opacity="0.800"/><rect x="53.8" y="8" width="1.900" height="15" fill="#85828a" opacity="0.800"/><rect x="57.4" y="8" width="1.900" height="15" fill="#85828a" opacity="0.800"/><rect x="-1" y="-2" width="3" height="28" fill="#aaa6a6" opacity="0.700"/><rect x="34.500" y="10.500" width="12.500" height="16" rx="1.500" fill="#cfcdc6"/><path d="M40 25 Q38 17 40.500 11 Q42 6 39.500 1" fill="none" stroke="#6f7838" stroke-width="1.700"/><path d="M38.500 -1 Q42 -1.500 45 -1 Q43.500 3.500 40.500 5.500 Q39 3 38.500 -1 Z" fill="#26340f"/><path d="M36.500 5.200 Q33.500 3 31 5.600 Q32.500 8.200 36.500 7 Z" fill="#6f8a3a"/><path d="M33 -0.500 Q36 0.500 38 2.400 L36 3 Q34 1.500 33 -0.500 Z" fill="#86a04a"/><path d="M41.500 7 Q46 7.500 47.500 12.500" fill="none" stroke="#a89466" stroke-width="1.600"/><path d="M37 26 Q39 19 42.500 18 Q45 20 44.500 26 Z" fill="#7a6d3a"/><path d="M37.500 14 Q41 13 45 15 M37 18 Q41 16 46 19" fill="none" stroke="#f2f0ea" stroke-width="0.900" opacity="0.800"/></g></pattern><clipPath id="clipc"><rect x="0.750" y="0.750" width="1254.7" height="45.700" rx="4.800"/></clipPath></defs><g clip-path="url(#clipc)"><rect x="0" y="0" width="1248.7" height="47.200" fill="#22423e"/><rect x="0" y="0" width="1248.7" height="25.400" fill="url(#thumb)"/><rect x="0" y="30.900" width="1248.7" height="1.600" fill="#82309a"/></g><rect x="0.750" y="0.750" width="1254.7" height="45.700" rx="4.800" fill="none" stroke="#e4e4e4" stroke-width="1.500"/><rect x="6" y="17.300" width="2.200" height="12.200" rx="1.100" fill="#fff"/></svg>
<div class="a" style="left:106.900px;top:533.400px;width:127.400px;height:23.300px;border-radius:5.500px;background:#5c9ade;border:2.200px solid #f4f0a4"></div>
<div class="a" style="left:110.800px;top:541px;width:2.400px;height:8px;border-radius:1px;background:#0a74dc"></div>
<div class="a" style="left:226.200px;top:541px;width:2.400px;height:8px;border-radius:1px;background:#0a74dc"></div>
<svg style="left:126px;top:541px" width="12.500" height="10" viewBox="0 0 15 12"><path d="M0 0.400 H9.200 V2.600 H5.700 V11.600 H3.500 V2.600 H0 Z M8 4.400 H15 V6.300 H12.500 V11.600 H10.500 V6.300 H8 Z" fill="#fff"/></svg>
<span class="t" style="left:150.0px;top:539.5px;font-size:12.5px;color:#fff;transform:scaleX(0.7570);font-family:'Liberation Serif',serif;font-style:italic;">The future is yours</span>
<div class="a" style="left:104.900px;top:425px;width:2.200px;height:135px;background:#fff"></div>
<svg style="left:99px;top:418.800px" width="13.200" height="15.400" viewBox="0 0 12.400 15.600" preserveAspectRatio="none"><path d="M1 0 H11.400 Q12.400 0 12.400 1 V9.600 L6.200 15.600 L0 9.600 V1 Q0 0 1 0 Z" fill="#fff"/></svg>
<div class="a" style="left:1272px;top:419px;width:8px;height:140.500px;background:#1a1a1a"></div>
<div class="a" style="left:1272px;top:419px;width:8px;height:108px;border-radius:4px;background:#a2a2a2"></div>
<div class="a" style="left:0;top:557px;width:1280px;height:2.500px;background:#0c0c0c"></div>
<div class="a" style="left:0;top:559.500px;width:1280px;height:7.500px;background:#212121"></div>
<div class="a" style="left:0;top:559.500px;width:625px;height:9px;border-radius:4px;background:#ababab"></div>
<div class="a" style="left:1223.700px;top:512px;width:42.300px;height:42px;border-radius:6px;background:#2e2e2e"></div>
<svg style="left:1236.500px;top:524.500px" width="17" height="17" viewBox="0 0 17 17"><circle cx="6.800" cy="6.800" r="5.400" fill="none" stroke="#fff" stroke-width="1.800"/><path d="M10.800 10.800 L16 16" stroke="#fff" stroke-width="2.100"/></svg>

</div>
</body>
</html>
